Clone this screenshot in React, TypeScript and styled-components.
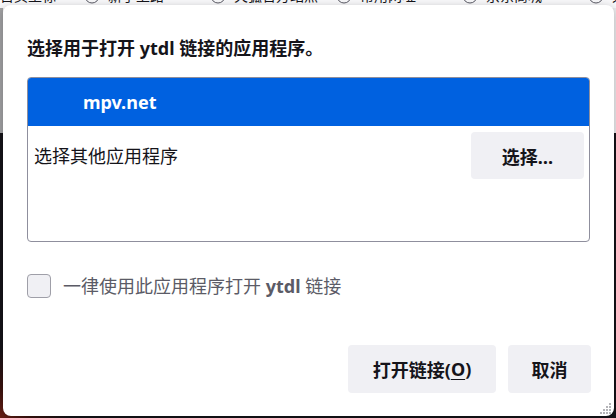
import React from 'react';
import styled, { createGlobalStyle } from 'styled-components';

const FONT = `"Noto Sans", "Noto Sans CJK SC", sans-serif`;

const GlobalStyle = createGlobalStyle`
  html, body {
    margin: 0;
    padding: 0;
    overflow: hidden;
    background: #1c1b22;
  }
  * {
    box-sizing: border-box;
  }
`;

const Screen = styled.div`
  position: relative;
  width: 616px;
  height: 418px;
  overflow: hidden;
  font-family: ${FONT};
`;

const Backdrop = styled.div`
  display: flex;
  flex-direction: column;
  height: 100%;
`;

const Bookmarks = styled.div`
  display: flex;
  align-items: center;
  height: 24px;
  margin-top: -16px;
  background: #f9f9fb;
  overflow: hidden;
  flex-shrink: 0;
`;

const Bookmark = styled.div<{ $width?: number }>`
  display: flex;
  align-items: center;
  gap: 8px;
  width: ${(p) => p.$width ?? 126}px;
  flex-shrink: 0;
  font-size: 14px;
  line-height: 16px;
  color: #15141a;
  white-space: nowrap;
  overflow: hidden;
`;

const Chrome = styled.div`
  height: 125px;
  flex-shrink: 0;
  background: linear-gradient(to right, #a2a2a4 0 3px, #ececee 3px);
`;

const Content = styled.div`
  flex: 1;
  background:
    radial-gradient(circle at 0% 100%, #6a2016 0, #3a120e 30px, transparent 70px),
    #141318;
`;

const Dialog = styled.div`
  position: absolute;
  left: 3px;
  top: 5px;
  width: 611px;
  height: 411px;
  background: #ffffff;
  border-radius: 8px;
  box-shadow: 0 2px 10px rgba(0, 0, 0, 0.25);
  padding: 31px 24px 23px 24px;
  display: flex;
  flex-direction: column;
`;

const Title = styled.h1`
  margin: 0;
  font-size: 18px;
  line-height: 24px;
  font-weight: 700;
  color: #15141a;
  font-family: ${FONT};
`;

const AppList = styled.div`
  margin-top: 17px;
  height: 165px;
  border: 1px solid #8f8f9d;
  border-radius: 4px;
  overflow: hidden;
  display: flex;
  flex-direction: column;
`;

const AppRow = styled.div<{ $selected?: boolean }>`
  display: flex;
  align-items: center;
  height: 48px;
  padding-left: 55px;
  font-size: 18px;
  font-weight: ${(p) => (p.$selected ? 700 : 400)};
  background: ${(p) => (p.$selected ? '#0061e0' : 'transparent')};
  color: ${(p) => (p.$selected ? '#ffffff' : '#15141a')};
`;

const OtherRow = styled.div`
  display: flex;
  align-items: center;
  justify-content: space-between;
  padding: 6px 5px 6px 6px;
  font-size: 18px;
  line-height: 24px;
  color: #15141a;
`;

const Button = styled.button<{ $width: number; $height?: number }>`
  width: ${(p) => p.$width}px;
  height: ${(p) => p.$height ?? 47}px;
  border: none;
  border-radius: 4px;
  background: #f0f0f4;
  color: #15141a;
  font-family: ${FONT};
  font-size: 18px;
  font-weight: 700;
  padding: 0;
  display: flex;
  align-items: center;
  justify-content: center;
  cursor: pointer;
`;

const CheckRow = styled.label`
  display: flex;
  align-items: center;
  gap: 12px;
  margin-top: 32px;
  font-size: 18px;
  line-height: 24px;
  color: #5b5b66;
`;

const CheckBox = styled.span`
  width: 24px;
  height: 24px;
  border: 1px solid #9f9fa8;
  border-radius: 4px;
  background: #f0f0f4;
  flex-shrink: 0;
`;

const Strong = styled.b`
  font-weight: 700;
`;

const Footer = styled.div`
  margin-top: auto;
  display: flex;
  justify-content: flex-end;
  gap: 12px;
  margin-right: -1px;
`;

const AccessKey = styled.span`
  text-decoration: underline;
  text-underline-offset: 3px;
`;

const Grip = styled.svg`
  position: absolute;
  right: 2px;
  bottom: 1px;
`;

const BOOKMARKS = ['新手上路', '火狐官方站点', '常用网址', '京东商城', '天猫精选'];

const GRIP_DOTS = [
  [9, 0],
  [6, 3],
  [9, 3],
  [3, 6],
  [6, 6],
  [9, 6],
  [0, 9],
  [3, 9],
  [6, 9],
  [9, 9],
];

const Globe = () => (
  <svg width="16" height="16" viewBox="0 0 16 16" fill="none">
    <circle cx="8" cy="8" r="7" stroke="#5b5b66" strokeWidth="1" />
  </svg>
);

const App: React.FC = () => {
  return (
    <Screen>
      <GlobalStyle />
      <Backdrop>
        <Bookmarks>
          <Bookmark $width={84}>
            <span>首页坐标</span>
          </Bookmark>
          {BOOKMARKS.map((name) => (
            <Bookmark key={name}>
              <Globe />
              <span>{name}</span>
            </Bookmark>
          ))}
        </Bookmarks>
        <Chrome />
        <Content />
      </Backdrop>

      <Dialog>
        <Title>选择用于打开 ytdl 链接的应用程序。</Title>
        <AppList>
          <AppRow $selected>mpv.net</AppRow>
          <OtherRow>
            <span>选择其他应用程序</span>
            <Button $width={113}>选择…</Button>
          </OtherRow>
        </AppList>
        <CheckRow>
          <CheckBox />
          <span>
            一律使用此应用程序打开 <Strong>ytdl</Strong> 链接
          </span>
        </CheckRow>
        <Footer>
          <Button $width={148} $height={48}>
            打开链接(<AccessKey>O</AccessKey>)
          </Button>
          <Button $width={83} $height={48}>
            取消
          </Button>
        </Footer>
        <Grip width="12" height="12" viewBox="0 0 12 12">
          {GRIP_DOTS.map(([x, y]) => (
            <rect key={`${x}-${y}`} x={x} y={y} width="2" height="2" fill="#b4b4b8" />
          ))}
        </Grip>
      </Dialog>
    </Screen>
  );
};

export default App;
